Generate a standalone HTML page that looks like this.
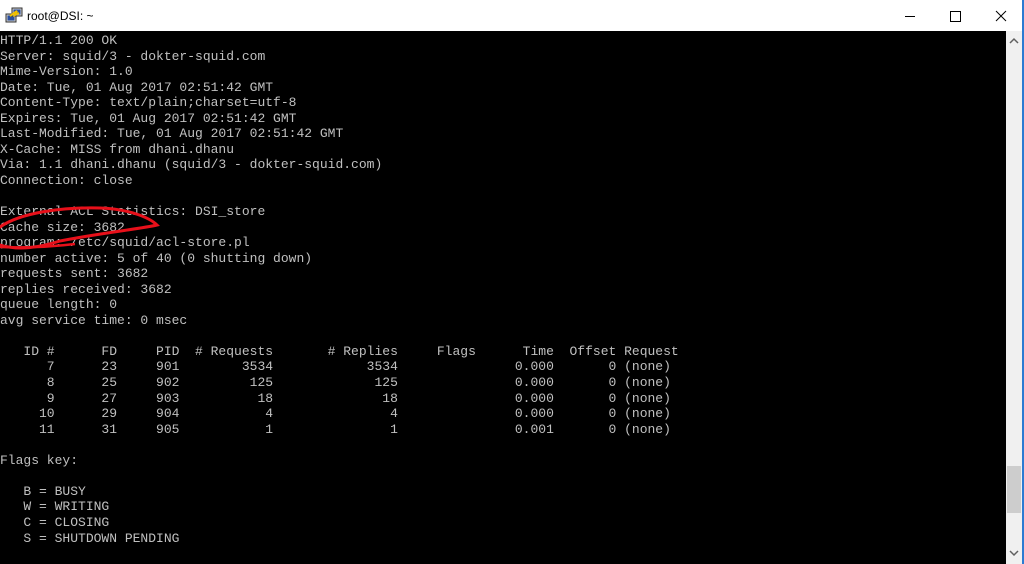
<!DOCTYPE html>
<html><head><meta charset="utf-8"><style>
html,body{margin:0;padding:0;width:1024px;height:564px;overflow:hidden;background:#fff;}
#title{position:absolute;left:0;top:0;width:1024px;height:31px;background:#fff;}
#title .t{position:absolute;left:27px;top:9px;font:12px "Liberation Sans",sans-serif;color:#000;}
#term{position:absolute;left:0;top:31px;width:1006px;height:533px;background:#000;}
#sb{position:absolute;left:1006px;top:31px;width:16px;height:533px;background:#f0f0f0;}
#thumb{position:absolute;left:1007px;top:466px;width:14px;height:47px;background:#cdcdcd;}
#edge{position:absolute;left:1022px;top:0;width:2px;height:564px;background:#2b7bd2;}
pre{position:absolute;left:0;top:33px;margin:0;font:13px/15.55px "Liberation Mono",monospace;color:#c0c0c0;}
</style></head><body>
<div id="title">
<svg style="position:absolute;left:5px;top:7px" width="18" height="18" viewBox="0 0 18 18">
<rect x="1" y="7" width="10" height="8" fill="#ccc" stroke="#333"/><rect x="2.5" y="8.5" width="7" height="5" fill="#2a4fa0"/>
<rect x="7" y="1" width="10" height="8" fill="#ccc" stroke="#333"/><rect x="8.5" y="2.5" width="7" height="5" fill="#2a4fa0"/>
<path d="M5 9 L12 4 L10 8 L14 6" stroke="#f0c000" stroke-width="2" fill="none"/></svg>
<span class="t">root@DSI: ~</span>
<svg style="position:absolute;left:900px;top:8px" width="110" height="18">
<line x1="5" y1="8.5" x2="15" y2="8.5" stroke="#000"/>
<rect x="50.5" y="3.5" width="10" height="10" fill="none" stroke="#000"/>
<path d="M96 3 L106 13 M106 3 L96 13" stroke="#000"/></svg>
</div>
<div id="term"></div>
<div id="sb"></div>
<div id="thumb"></div>
<svg style="position:absolute;left:1008px;top:36px" width="12" height="10"><path d="M2 7 L6 3 L10 7" stroke="#606060" stroke-width="1.5" fill="none"/></svg>
<svg style="position:absolute;left:1008px;top:548px" width="12" height="10"><path d="M2 3 L6 7 L10 3" stroke="#606060" stroke-width="1.5" fill="none"/></svg>
<div id="edge"></div>
<pre>HTTP/1.1 200 OK
Server: squid/3 - dokter-squid.com
Mime-Version: 1.0
Date: Tue, 01 Aug 2017 02:51:42 GMT
Content-Type: text/plain;charset=utf-8
Expires: Tue, 01 Aug 2017 02:51:42 GMT
Last-Modified: Tue, 01 Aug 2017 02:51:42 GMT
X-Cache: MISS from dhani.dhanu
Via: 1.1 dhani.dhanu (squid/3 - dokter-squid.com)
Connection: close

External ACL Statistics: DSI_store
Cache size: 3682
program: /etc/squid/acl-store.pl
number active: 5 of 40 (0 shutting down)
requests sent: 3682
replies received: 3682
queue length: 0
avg service time: 0 msec

   ID #      FD     PID  # Requests       # Replies     Flags      Time  Offset Request
      7      23     901        3534            3534               0.000       0 (none)
      8      25     902         125             125               0.000       0 (none)
      9      27     903          18              18               0.000       0 (none)
     10      29     904           4               4               0.000       0 (none)
     11      31     905           1               1               0.001       0 (none)

Flags key:

   B = BUSY
   W = WRITING
   C = CLOSING
   S = SHUTDOWN PENDING</pre>
<svg style="position:absolute;left:0;top:196px" width="170" height="60">
<path d="M0 31 C20 17 60 11 100 12 C130 13 150 22 157 29 C140 33 100 37 60 45 C40 51 20 55 0 49" stroke="#e8101a" stroke-width="3" fill="none" stroke-linecap="round"/>
<path d="M0 51 C25 52 50 51 75 48" stroke="#e8101a" stroke-width="2.5" fill="none"/>
</svg>
</body></html>
